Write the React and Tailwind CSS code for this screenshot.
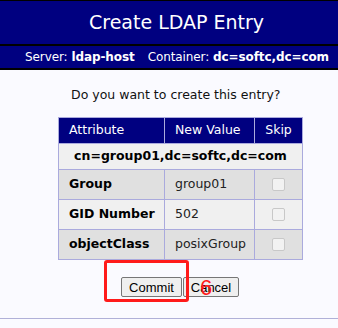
import React from "react";

const font = { fontFamily: '"DejaVu Sans", Verdana, sans-serif' };

function Check() {
  return <div className="mx-auto w-[13px] h-[13px] rounded-[2px] border border-[#c8c8c8] bg-[#f2f2f2]" />;
}

export default function App() {
  const rows = [
    ["Group", "group01", "bg-[#e0e0e0]"],
    ["GID Number", "502", "bg-[#f0f0f0]"],
    ["objectClass", "posixGroup", "bg-[#e0e0e0]"],
  ];
  return (
    <div className="w-[338px] h-[328px] overflow-hidden bg-[#fafaff]" style={font}>
      <div className="border-t border-black bg-[#000080] h-[44px] flex items-center pl-[89px] text-white text-[19px]">
        Create LDAP Entry
      </div>
      <div className="border-y-2 border-black bg-[#000080] h-[26px] flex items-center pl-[25px] text-white text-[12px] whitespace-nowrap tracking-[-0.1px]">
        <span>Server:</span>
        <b className="ml-[4px]">ldap-host</b>
        <span className="ml-[13px]">Container:</span>
        <b className="ml-[4px]">dc=softc,dc=com</b>
      </div>
      <div className="h-[249px] border-b border-[#b0b0d8] relative">
        <div className="pt-[16px] pl-[71px] text-[12.5px] text-[#111] h-[47px] whitespace-nowrap">
          Do you want to create this entry?
        </div>
        <table className="ml-[58px] w-[245px] border-collapse text-[12.5px] border border-[#aaaadd]">
          <thead>
            <tr className="h-[26px] bg-[#000080] text-white">
              <th className="w-[106px] text-left pl-[10px] font-normal border border-[#aaaadd]">Attribute</th>
              <th className="w-[90px] text-left pl-[10px] font-normal border border-[#aaaadd]">New Value</th>
              <th className="font-normal border border-[#aaaadd]">Skip</th>
            </tr>
          </thead>
          <tbody>
            <tr className="h-[26px] bg-[#f0f0f0]">
              <td colSpan={3} className="text-center font-bold text-black border border-[#aaaadd]">cn=group01,dc=softc,dc=com</td>
            </tr>
            {rows.map(([a, v, bg]) => (
              <tr key={a} className={"h-[30px] " + bg}>
                <td className="pl-[10px] font-bold text-black border border-[#aaaadd] whitespace-nowrap">{a}</td>
                <td className="pl-[10px] text-[#222] border border-[#aaaadd]">{v}</td>
                <td className="border border-[#aaaadd]"><Check /></td>
              </tr>
            ))}
          </tbody>
        </table>
        <div className="flex gap-[1px] ml-[121px] mt-[17px]" style={{ fontFamily: '"Liberation Sans", Arial, sans-serif' }}>
          <button className="w-[61px] h-[20px] bg-[#efefef] border border-[#767676] rounded-[2px] text-[13px] text-black">Commit</button>
          <button className="w-[56px] h-[20px] bg-[#efefef] border border-[#767676] rounded-[2px] text-[13px] text-black">Cancel</button>
        </div>
        <div className="absolute left-[104px] top-[190px] w-[85px] h-[42px] border-[3px] border-[#ff1a1a] rounded-[3px]" />
        <div className="absolute left-[200px] top-[207px] text-[22px] leading-none text-[#ff1a1a]" style={{ fontFamily: '"Liberation Sans", Arial, sans-serif' }}>6</div>
      </div>
    </div>
  );
}
